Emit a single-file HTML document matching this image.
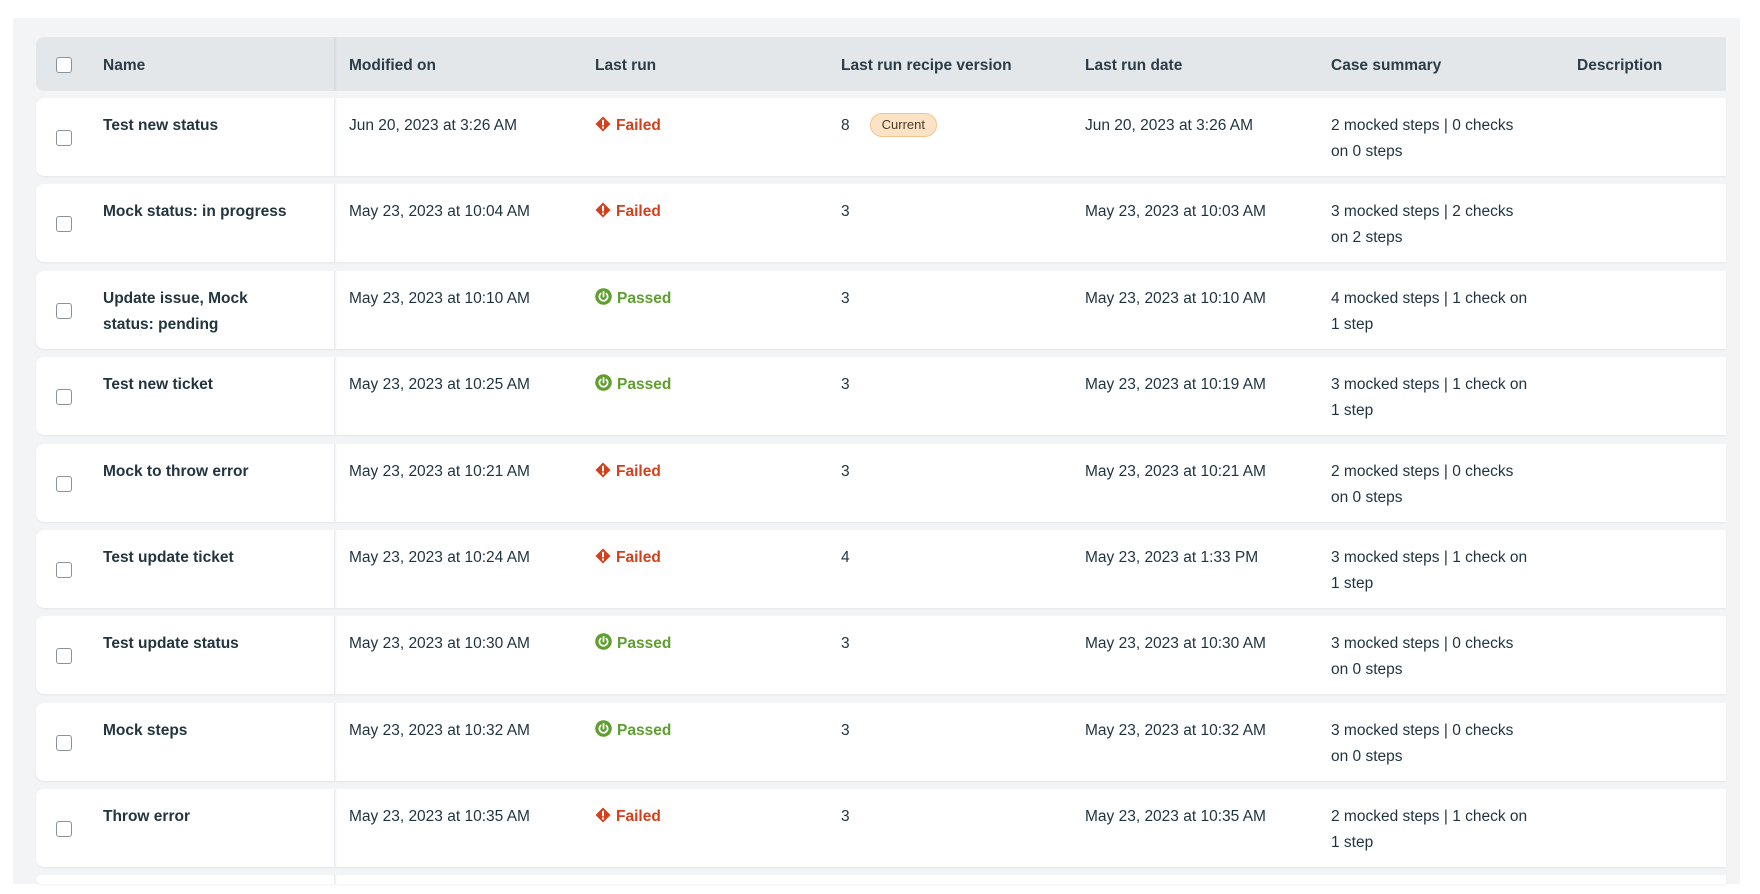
<!DOCTYPE html>
<html><head><meta charset="utf-8"><style>
*{box-sizing:border-box;margin:0;padding:0}
html,body{width:1760px;height:894px;overflow:hidden}
body{background:#fff;font-family:"Liberation Sans",sans-serif;color:#1e3340;position:relative}
#wrap{position:absolute;left:0;top:0;width:1760px;height:894px;overflow:hidden}
.panel{position:absolute;left:13px;top:18px;width:1727px;height:866px;background:#f2f4f6}
.hdr{position:absolute;left:36px;top:37px;width:1690px;height:54px;background:#e3e7ea;border-radius:8px 0 0 8px;font-size:15.5px;font-weight:bold;color:#2a3c47}
.row{position:absolute;left:36px;width:1690px;height:78px;background:#fff;border-radius:8px 0 0 8px;box-shadow:0 1px 2px rgba(0,0,0,.06);font-size:15.5px;overflow:hidden}
.div{position:absolute;left:298px;top:0;bottom:0;width:3px;background:linear-gradient(to right,#e6e9ec,#fff)}
.hdr .div{background:linear-gradient(to right,#d3d8dc,#e3e7ea)}
.c{position:absolute;white-space:nowrap}
.hdr .c{top:20px}
.row .c{top:15px;line-height:26px}
.cb{position:absolute;left:20px;width:16px;height:16px;border:1.5px solid #8a9399;border-radius:3px;background:#fff}
.nm{font-weight:bold;color:#22353f}
.f{color:#d4401b;font-weight:bold}
.p{color:#5f9e2f;font-weight:bold}
.ic{display:inline-block;vertical-align:-2px;margin-right:5px}
.badge{display:inline-block;margin-left:20px;padding:0 11px;height:24px;line-height:22px;border:1px solid #f2c48c;background:#fde3c5;border-radius:12px;font-size:13px;color:#4a3a2a;vertical-align:1px}
</style></head><body><div id="wrap">
<div class="panel"></div>
<div class="hdr">
<div class="cb" style="top:20px"></div>
<div class="div"></div>
<div class="c" style="left:67px">Name</div>
<div class="c" style="left:313px">Modified on</div>
<div class="c" style="left:559px">Last run</div>
<div class="c" style="left:805px">Last run recipe version</div>
<div class="c" style="left:1049px">Last run date</div>
<div class="c" style="left:1295px">Case summary</div>
<div class="c" style="left:1541px">Description</div>
</div>
<script>
const F='<svg class="ic" width="16" height="16" viewBox="0 0 16 16"><path d="M8 0.5L15.5 8 8 15.5 0.5 8Z" fill="#d4401b"/><rect x="7" y="3.8" width="2" height="5.5" fill="#fff"/><rect x="7" y="10.5" width="2" height="2" fill="#fff"/></svg><span class="f">Failed</span>';
const P='<svg class="ic" width="17" height="17" viewBox="0 0 16 16"><circle cx="8" cy="8" r="7.8" fill="#5f9e2f"/><path d="M5.3 5.3A3.9 3.9 0 1 0 10.7 5.3" fill="none" stroke="#fff" stroke-width="1.7" stroke-linecap="round"/><path d="M8 3.5V8" stroke="#fff" stroke-width="1.7" stroke-linecap="round"/></svg><span class="p">Passed</span>';
const rows=[
["Test new status","Jun 20, 2023 at 3:26 AM",F,'8<span class="badge">Current</span>',"Jun 20, 2023 at 3:26 AM","2 mocked steps | 0 checks<br>on 0 steps"],
["Mock status: in progress","May 23, 2023 at 10:04 AM",F,"3","May 23, 2023 at 10:03 AM","3 mocked steps | 2 checks<br>on 2 steps"],
["Update issue, Mock<br>status: pending","May 23, 2023 at 10:10 AM",P,"3","May 23, 2023 at 10:10 AM","4 mocked steps | 1 check on<br>1 step"],
["Test new ticket","May 23, 2023 at 10:25 AM",P,"3","May 23, 2023 at 10:19 AM","3 mocked steps | 1 check on<br>1 step"],
["Mock to throw error","May 23, 2023 at 10:21 AM",F,"3","May 23, 2023 at 10:21 AM","2 mocked steps | 0 checks<br>on 0 steps"],
["Test update ticket","May 23, 2023 at 10:24 AM",F,"4","May 23, 2023 at 1:33 PM","3 mocked steps | 1 check on<br>1 step"],
["Test update status","May 23, 2023 at 10:30 AM",P,"3","May 23, 2023 at 10:30 AM","3 mocked steps | 0 checks<br>on 0 steps"],
["Mock steps","May 23, 2023 at 10:32 AM",P,"3","May 23, 2023 at 10:32 AM","3 mocked steps | 0 checks<br>on 0 steps"],
["Throw error","May 23, 2023 at 10:35 AM",F,"3","May 23, 2023 at 10:35 AM","2 mocked steps | 1 check on<br>1 step"]];
const L=[67,313,559,805,1049,1295];
let h='';
rows.forEach((r,i)=>{
 const top=98+i*86.4;
 h+=`<div class="row" style="top:${top}px"><div class="cb" style="top:32px"></div><div class="div"></div>`;
 r.forEach((t,j)=>{h+=`<div class="c${j==0?' nm':''}" style="left:${L[j]}px">${t}</div>`});
 h+='</div>';
});
h+='<div class="row" style="top:875px;height:9px"><div class="div"></div></div>';
document.write(h);
</script>
</div></body></html>
